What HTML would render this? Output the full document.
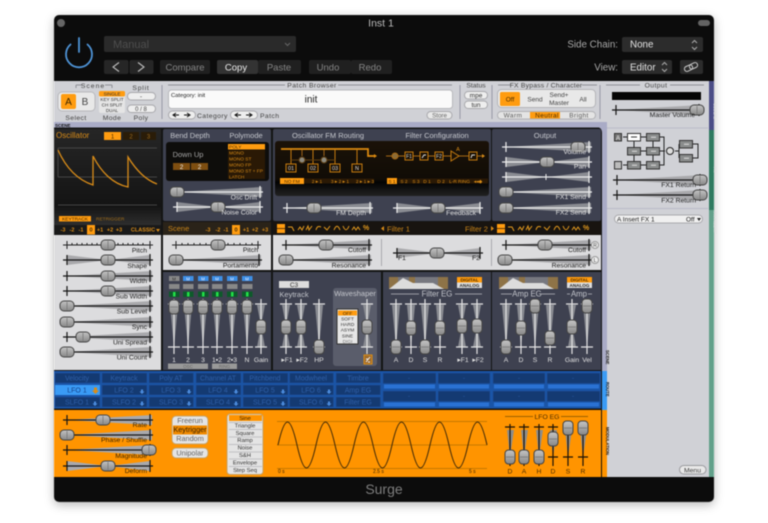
<!DOCTYPE html>
<html><head><meta charset="utf-8"><style>
html,body{margin:0;padding:0;background:#fff;width:768px;height:523px;overflow:hidden}
#w{position:absolute;left:54px;top:15px;width:660px;height:487px;border-radius:5px;box-shadow:0 3px 10px rgba(0,0,0,.28)}
svg{position:absolute;left:0;top:0;filter:blur(.5px)}
text{font-family:"Liberation Sans",sans-serif}
.c{text-anchor:middle}.r{text-anchor:end}
.l{font-size:6.8px;fill:#1c1c1c}
.d{font-size:6.8px;fill:#e4e4e4}
.h{font-size:7.5px;fill:#c4c6cc}
.o{font-size:5.5px;fill:#d98c18;font-weight:bold}
.g{font-size:6.800px;fill:#444;letter-spacing:.4px}
.b{font-size:7px;fill:#2f5fa8}
.k{font-size:9.5px;fill:#858585}
</style></head><body><div id="w"></div>
<svg width="768" height="523" viewBox="0 0 768 523" xmlns="http://www.w3.org/2000/svg">
<defs>
<linearGradient id="hg" x1="0" y1="0" x2="0" y2="1"><stop offset="0" stop-color="#c4c4c4"/><stop offset="1" stop-color="#888"/></linearGradient>
<linearGradient id="og" x1="0" y1="0" x2="0" y2="1"><stop offset="0" stop-color="#262626"/><stop offset=".8" stop-color="#141414"/><stop offset="1" stop-color="#2e2e2e"/></linearGradient>
<linearGradient id="ig" x1="0" y1="0" x2="0" y2="1"><stop offset="0" stop-color="#1b1208"/><stop offset=".7" stop-color="#100c06"/><stop offset=".75" stop-color="#030303"/><stop offset="1" stop-color="#222"/></linearGradient>
<g id="hh"><rect x="-7" y="-5" width="14" height="10" rx="4" fill="url(#hg)" stroke="#444" stroke-width="1"/><path d="M0 -4V4" stroke="#777" stroke-width=".8"/></g>
<g id="hv"><rect x="-5" y="-7" width="10" height="14" rx="3.5" fill="url(#hg)" stroke="#444" stroke-width="1"/><path d="M-4 0H4" stroke="#777" stroke-width=".8"/></g>
<g id="sl"><path d="M3 0L89 -5V5Z" fill="#a9a9ac"/><path d="M0 0H90M4 -5V5M87 -6V6" stroke="#151515" stroke-width="1.2" fill="none"/></g>
<g id="sb"><path d="M4 -5V5L45 0L87 5V-5L45 0Z" fill="#a9a9ac"/><path d="M0 0H90M4 -5V5M87 -6V6" stroke="#151515" stroke-width="1.2" fill="none"/></g>
<g id="sd"><path d="M3 0L89 -5V5Z" fill="#8a8c92"/><path d="M0 0H90M4 -5V5M87 -6V6" stroke="#eee" stroke-width="1.2" fill="none"/></g>
<g id="se"><path d="M4 -5V5L45 0L87 5V-5L45 0Z" fill="#8a8c92"/><path d="M0 0H90M4 -5V5M87 -6V6" stroke="#eee" stroke-width="1.2" fill="none"/></g>
<g id="vd"><path d="M0 46L-4 3H4Z" fill="#8a8c92"/><path d="M0 -3V52M-6 2H6M-6 45H6" stroke="#e4e4e4" stroke-width="1.2" fill="none"/></g>
<g id="vb"><path d="M-4 3H4L0 24L4 45H-4L0 24Z" fill="#8a8c92"/><path d="M0 -3V52M-6 2H6M-6 45H6" stroke="#e4e4e4" stroke-width="1.2" fill="none"/></g>
<g id="vo"><path d="M0 31L-3 4H4Z" fill="#8d8d8d"/><path d="M0 -2V40M-5 1H5M-5 31H5" stroke="#1a1208" stroke-width="1.2" fill="none"/></g>
<g id="eg"><rect width="59" height="12" fill="#77787f"/><rect x="0" width="9" height="12" fill="#8e7347"/><rect x="20" width="6" height="12" fill="#8e7347"/><rect x="49" width="10" height="12" fill="#8e7347"/><path d="M0 12L14 1L24 6H44L55 12Z" fill="#dcdcdc"/></g>
<g id="dg"><rect width="25" height="11" fill="#ddd"/><rect width="25" height="5.5" fill="#ff9c10"/><text x="12.5" y="4.6" class="c" style="font-size:4.6px;fill:#4a2c00;font-weight:bold">DIGITAL</text><text x="12.5" y="10" class="c" style="font-size:4.6px;fill:#222;font-weight:bold">ANALOG</text></g>
<g id="ft"><path d="M0 3H4L6 7M10 6L12 3L14 6L16 2M18 6L20 2L21 6L24 2M28 6C29 2 31 2 33 3M36 3L39 6L42 2M46 6C48 1 50 1 52 6M55 2C57 7 59 7 61 2M64 6L66 3L68 6L70 3L72 6" stroke="#e39a1e" stroke-width="1" fill="none"/><text x="75" y="6" style="font-size:7px;fill:#e39a1e;font-weight:bold">%</text></g>
</defs>

<!-- window -->
<rect x="54" y="15" width="660" height="487" rx="5" fill="#0c0c0c"/>
<circle cx="61" cy="23" r="4" fill="#666"/>
<rect x="698" y="20" width="12" height="6" rx="3" fill="#636363"/>
<text x="381" y="26.5" class="c" style="font-size:10.5px;fill:#bcbcbc">Inst 1</text>
<!-- power -->
<path d="M70.500 44.500A13 13 0 1 0 87.500 44.500" fill="none" stroke="#4e93d6" stroke-width="1.8" stroke-linecap="round"/>
<path d="M79 38V52" stroke="#4e93d6" stroke-width="1.8" stroke-linecap="round"/>
<!-- top controls -->
<rect x="104" y="36" width="192" height="16" rx="2" fill="#2a2a2a"/>
<text x="113" y="48" style="font-size:11px;fill:#4e4e4e">Manual</text>
<path d="M285 43l2.500 2.500 2.500-2.500" stroke="#666" fill="none"/>
<rect x="104" y="60" width="24.500" height="14" rx="2" fill="#262626"/><rect x="129.500" y="60" width="24" height="14" rx="2" fill="#262626"/>
<path d="M119 62.500L113 67L119 71.500M138 62.500L144 67L138 71.500" stroke="#bdbdbd" stroke-width="1.1" fill="none"/>
<rect x="160" y="60" width="50" height="14" rx="2" fill="#202020"/><text x="185" y="70.500" class="c k">Compare</text>
<rect x="217" y="60" width="41" height="14" rx="2" fill="#333"/><text x="236" y="70.500" class="c" style="font-size:9.500px;fill:#ececec">Copy</text>
<rect x="258" y="60" width="43" height="14" rx="2" fill="#202020"/><text x="279" y="70.500" class="c k">Paste</text>
<rect x="309" y="60" width="42" height="14" rx="2" fill="#202020"/><text x="328" y="70.500" class="c k">Undo</text>
<rect x="351" y="60" width="41" height="14" rx="2" fill="#202020"/><text x="370" y="70.500" class="c k">Redo</text>
<text x="618" y="47.500" class="r" style="font-size:9.800px;fill:#a8a8a8">Side Chain:</text>
<rect x="622" y="37" width="81" height="15" rx="2" fill="#2c2c2c"/><text x="630" y="47.500" style="font-size:9.800px;fill:#e4e4e4">None</text>
<path d="M692 43l2.500-2.500 2.500 2.500M692 47l2.500 2.500 2.500-2.500" stroke="#aaa" fill="none"/>
<text x="618" y="70.500" class="r" style="font-size:9.800px;fill:#a8a8a8">View:</text>
<rect x="622" y="60" width="50" height="14" rx="2" fill="#2c2c2c"/><text x="630" y="70.500" style="font-size:9.800px;fill:#e4e4e4">Editor</text>
<path d="M662 65l2.500-2.500 2.500 2.500M662 69l2.500 2.500 2.500-2.500" stroke="#aaa" fill="none"/>
<rect x="680" y="60" width="23" height="14" rx="2" fill="#2c2c2c"/>
<g transform="rotate(-25 691 67)" fill="none" stroke="#ccc"><rect x="684" y="64.500" width="8.500" height="5" rx="2.500"/><rect x="689.500" y="64.500" width="8.500" height="5" rx="2.500"/></g>

<!-- panel base -->
<rect x="54" y="81" width="660" height="396" fill="#d0d1d6"/>
<rect x="54" y="122" width="553" height="287" fill="#a9abc6"/>
<path d="M54 127H596Q602 127 602 133V409H54Z" fill="#141414"/>
<rect x="54" y="122" width="553" height="5.500" fill="#a9abc6"/>
<text x="55" y="127" style="font-size:4.500px;font-weight:bold;fill:#111">SCENE</text>

<!-- header -->
<g fill="none" stroke="#8f9097"><path d="M76 85H82M105 85H112M76 85V88M112 85V88"/><path d="M168 85H285M338 85H452M498 85H511M582 85H597M606 85H640M670 85H704"/><path d="M162 85V119M460 85V119M492 85V119M600 85V119" stroke="#9899a6"/></g>
<text x="93" y="88" class="c g" style="letter-spacing:1px">Scene</text>
<text x="141" y="90" class="c g" style="letter-spacing:.8px">Split</text>
<text x="312" y="87.500" class="c g">Patch Browser</text>
<text x="476" y="87.500" class="c g" style="letter-spacing:0">Status</text>
<text x="546" y="87.500" class="c g" style="letter-spacing:.2px">FX Bypass / Character</text>
<text x="656" y="87.500" class="c g">Output</text>
<rect x="58" y="92" width="37" height="19" rx="4" fill="#e8e8e8" stroke="#b8b8bc"/>
<rect x="61" y="94" width="15" height="15" rx="2" fill="#ff9c10"/>
<text x="68.500" y="105" class="c" style="font-size:10px;fill:#3a2500">A</text>
<text x="85" y="105" class="c" style="font-size:10px;fill:#444">B</text>
<text x="76" y="120" class="c g">Select</text><text x="112" y="120" class="c g">Mode</text><text x="141" y="120" class="c g">Poly</text>
<rect x="99" y="91" width="26" height="22" rx="2" fill="#e5e5e5"/>
<rect x="99" y="91" width="26" height="5.500" rx="1.500" fill="#ff9c10"/>
<g style="font-size:4.600px;fill:#333"><text x="112" y="95.500" class="c">SINGLE</text><text x="112" y="101" class="c">KEY SPLIT</text><text x="112" y="106.500" class="c">CH SPLIT</text><text x="112" y="112" class="c">DUAL</text></g>
<rect x="127.500" y="92.500" width="28" height="7.500" rx="3.700" fill="#eee" stroke="#a8a8ac"/><text x="141" y="98.500" class="c" style="font-size:6px;fill:#333">-</text>
<rect x="127.500" y="105" width="28" height="7.500" rx="3.700" fill="#eee" stroke="#a8a8ac"/><text x="141" y="111" class="c" style="font-size:6px;fill:#444">0 / 8</text>
<rect x="168.500" y="90" width="284" height="18.500" rx="3" fill="#fafafa" stroke="#b8b8bc"/>
<text x="171" y="97" style="font-size:5.800px;fill:#222">Category: init</text>
<text x="311" y="102.500" class="c" style="font-size:10px;fill:#222">init</text>
<rect x="168.500" y="111" width="27" height="8" rx="4" fill="#eee" stroke="#a8a8ac"/><path d="M173 115H179M176 113l-3 2 3 2M184 115H190M187 113l3 2-3 2" stroke="#111" fill="none"/>
<text x="197" y="118" class="g">Category</text>
<rect x="230.500" y="111" width="27" height="8" rx="4" fill="#eee" stroke="#a8a8ac"/><path d="M235 115H241M238 113l-3 2 3 2M246 115H252M249 113l3 2-3 2" stroke="#111" fill="none"/>
<text x="260" y="118" class="g">Patch</text>
<rect x="427" y="111.500" width="25" height="7.500" rx="3.700" fill="#e8e8e8" stroke="#a8a8ac"/><text x="439.500" y="117.500" class="c" style="font-size:6.200px;fill:#666">Store</text>
<rect x="464.500" y="91.500" width="23" height="7.500" rx="3.700" fill="#eee" stroke="#a8a8ac"/><text x="476" y="97.500" class="c" style="font-size:6.500px;fill:#333">mpe</text>
<rect x="464.500" y="101" width="23" height="7.500" rx="3.700" fill="#eee" stroke="#a8a8ac"/><text x="476" y="107" class="c" style="font-size:6.500px;fill:#333">tun</text>
<rect x="497.500" y="89.500" width="98" height="18" rx="4" fill="#e8e8e8" stroke="#b4b4b8"/>
<rect x="500" y="92" width="20" height="14" rx="1.500" fill="#ff9c10"/>
<g style="font-size:6.500px;fill:#444"><text x="510" y="101.500" class="c" style="fill:#4a2c00">Off</text><text x="535" y="101.500" class="c">Send</text><text x="559" y="97" class="c">Send+</text><text x="559" y="105" class="c">Master</text><text x="583" y="101.500" class="c">All</text></g>
<rect x="497.500" y="111.500" width="98" height="7.500" rx="3.700" fill="#e4e4e4" stroke="#b0b0b4"/>
<rect x="530" y="112" width="30" height="6.500" fill="#ff9c10"/>
<g style="font-size:6.500px;fill:#5c5c5c;letter-spacing:.4px"><text x="513" y="117.500" class="c">Warm</text><text x="547" y="117.500" class="c" style="fill:#4a2c00">Neutral</text><text x="579" y="117.500" class="c">Bright</text></g>
<rect x="612" y="92" width="89" height="8" fill="#050505"/>
<use href="#sl" x="612" y="110"/>
<path d="M612 110H700" stroke="#151515"/>
<use href="#hh" x="697" y="110"/>
<text x="695" y="117" class="r l">Master Volume</text>

<!-- right strips -->
<rect x="709" y="81" width="5" height="49" fill="#4b4d86"/>
<rect x="709" y="130" width="5" height="80" fill="#2f7a60"/>
<rect x="709" y="210" width="5" height="267" fill="#62a08a"/>
<path d="M607 128H708M607 208.500H708" stroke="#b9bbc8"/>
<text transform="translate(713.500 103) rotate(90)" style="font-size:4px;fill:#ddd">GLOBAL</text>
<text transform="translate(713.500 167) rotate(90)" style="font-size:4px;fill:#ddd">FX</text>
<text transform="translate(713.500 212) rotate(90)" style="font-size:4px;fill:#ddd">FX INSERT</text>
<rect x="602" y="371" width="5" height="39" fill="#3a9bf5"/>
<rect x="602" y="410" width="5" height="67" fill="#ff9400"/>
<text transform="translate(606 350) rotate(90)" style="font-size:4.200px;font-weight:bold;fill:#222">SCENE</text>
<text transform="translate(606 382) rotate(90)" style="font-size:4.200px;font-weight:bold;fill:#123">ROUTE</text>
<text transform="translate(606 427) rotate(90)" style="font-size:4.200px;font-weight:bold;fill:#321">MODULATION</text>

<!-- FX routing -->
<g fill="none" stroke="#222" stroke-width="1">
<path d="M623 137H627M640 137H646M623 165H627M640 165H646M660 137H664V165H660M660 151H665M675 151H679V144M679 158V151M693 144H698V158H693M640 151H646"/>
<path d="M634 141V147M634 155V161M653 141V147M653 155V161"/>
</g>
<rect x="614.500" y="133.500" width="7" height="7.500" fill="#777" stroke="#333"/><text x="618" y="140" class="c" style="font-size:6px;fill:#eee">A</text>
<rect x="614.500" y="161.500" width="7" height="7.500" fill="#bbb" stroke="#333"/>
<rect x="627.500" y="133.500" width="13" height="7.500" fill="#fff" stroke="#333"/><path d="M631 137H637" stroke="#333"/>
<g fill="#8a8c8c" stroke="#333"><rect x="646.500" y="133.500" width="13" height="7.500"/><rect x="627.500" y="147.500" width="13" height="7.500"/><rect x="646.500" y="147.500" width="13" height="7.500"/><rect x="627.500" y="161.500" width="13" height="7.500"/><rect x="646.500" y="161.500" width="13" height="7.500"/><rect x="679.500" y="140.500" width="13" height="7.500"/><rect x="679.500" y="154.500" width="13" height="7.500"/></g>
<circle cx="670" cy="151" r="3.500" fill="#ddd" stroke="#222"/>
<g stroke="#ddd"><path d="M651 137.200H656M632 151.200H637M651 151.200H656M632 165.200H637M651 165.200H656M684 144.200H689M684 158.200H689"/></g>
<use href="#sl" x="613" y="180"/><path d="M700 180H705" stroke="#151515"/><use href="#hh" x="700" y="180"/><text x="696" y="187" class="r l">FX1 Return</text>
<use href="#sl" x="613" y="195"/><path d="M700 195H705" stroke="#151515"/><use href="#hh" x="700" y="195"/><text x="696" y="202.500" class="r l">FX2 Return</text>
<rect x="614.500" y="215" width="88" height="8" rx="4" fill="#f0f0f0" stroke="#a8a8ac"/>
<text x="617" y="221.500" style="font-size:6.500px;fill:#222">A Insert FX 1</text><text x="686" y="221.500" style="font-size:6.500px;fill:#222">Off</text><path d="M697 218h4l-2 3z" fill="#222"/>
<rect x="679.500" y="465.500" width="26.500" height="8.500" rx="4.200" fill="#e8e8e8" stroke="#9a9a9e"/><text x="692.500" y="472.300" class="c" style="font-size:6.800px;fill:#444">Menu</text>

<!-- oscillator -->
<rect x="54" y="129" width="107" height="96" fill="url(#og)"/>
<text x="56" y="138" style="font-size:8px;fill:#d98c18">Oscillator</text>
<rect x="104" y="132" width="17" height="8" fill="#ff9c10"/><text x="112.500" y="138.500" class="c" style="font-size:6px;fill:#4a2c00">1</text>
<rect x="123" y="132" width="16" height="8" fill="#2a1c08"/><text x="131" y="138.500" class="c" style="font-size:6px;fill:#9a6a20">2</text>
<rect x="141" y="132" width="15" height="8" fill="#2a1c08"/><text x="148.500" y="138.500" class="c" style="font-size:6px;fill:#9a6a20">3</text>
<path d="M58 148H157M58 177H157M58 205H157M58 148V177" stroke="#454545" fill="none"/>
<path d="M58 150C66 168 78 180 93 185V156C101 172 113 184 128 187V157C136 170 146 180 157 184" fill="none" stroke="#d98c18" stroke-width="1.300"/>
<rect x="59" y="216" width="32" height="5.500" fill="#ff9c10"/><text x="75" y="220.700" class="c" style="font-size:4.800px;fill:#4a2c00">KEYTRACK</text>
<text x="96" y="220.700" style="font-size:4.800px;fill:#a06c18">RETRIGGER</text>
<rect x="54" y="225" width="107" height="10" fill="#191919"/>
<rect x="87" y="225" width="8" height="9.500" fill="#ff9c10"/>
<text x="63" y="231.500" class="c o">-3</text><text x="72" y="231.500" class="c o">-2</text><text x="81" y="231.500" class="c o">-1</text><text x="91" y="231.500" class="c o" style="fill:#4a2c00">0</text><text x="100" y="231.500" class="c o">+1</text><text x="110" y="231.500" class="c o">+2</text><text x="119" y="231.500" class="c o">+3</text><text x="143" y="231.500" class="c o">CLASSIC</text>
<path d="M156 229h4l-2 3z" fill="#d98c18"/>
<rect x="54" y="235" width="107" height="135" fill="#dcdcde"/>
<path d="M63 245H153M67 241V249M150 241V249M72 245v-2M77 245v-2M82 245v-2M87 245v-2M92 245v-2M97 245v-2M118 245v-2M123 245v-2M128 245v-2M133 245v-2M138 245v-2M143 245v-2" stroke="#222" fill="none"/><use href="#hh" x="108" y="245"/><text x="147" y="252.500" class="r l">Pitch</text>
<use href="#sb" x="63" y="260"/><use href="#hh" x="108" y="260"/><text x="147" y="268" class="r l">Shape</text>
<use href="#sl" x="63" y="276"/><use href="#hh" x="108" y="276"/><text x="147" y="283" class="r l">Width</text>
<use href="#sl" x="63" y="291"/><use href="#hh" x="108" y="291"/><text x="147" y="298.500" class="r l">Sub Width</text>
<use href="#sl" x="63" y="306"/><use href="#hh" x="67" y="306"/><text x="147" y="313.500" class="r l">Sub Level</text>
<use href="#sl" x="63" y="322"/><use href="#hh" x="67" y="322"/><text x="147" y="329" class="r l">Sync</text>
<use href="#sl" x="63" y="337"/><use href="#hh" x="83" y="337"/><text x="147" y="344.500" class="r l">Uni Spread</text>
<use href="#sl" x="63" y="352"/><use href="#hh" x="67" y="352"/><text x="147" y="359.500" class="r l">Uni Count</text>

<!-- col2 top -->
<rect x="163" y="129" width="108" height="92" rx="2" fill="#3e4150"/>
<text x="190" y="138" class="c h">Bend Depth</text><text x="246" y="138" class="c h">Polymode</text>
<rect x="166" y="142" width="103" height="39" rx="3" fill="#0e0d0b"/>
<text x="188" y="157" class="c" style="font-size:7.500px;fill:#a5a5a5">Down Up</text>
<rect x="173" y="163" width="17" height="7" fill="#7e4e10"/><rect x="191" y="163" width="17" height="7" fill="#7e4e10"/>
<text x="181.500" y="169" class="c" style="font-size:6.500px;fill:#eee">2</text><text x="199.500" y="169" class="c" style="font-size:6.500px;fill:#eee">2</text>
<rect x="228" y="144" width="37" height="5.500" fill="#ff9c10"/><rect x="228" y="150" width="37" height="29" fill="#2a1905"/>
<g style="font-size:4.800px;fill:#d98c18"><text x="229" y="148.700" style="fill:#4a2c00">POLY</text><text x="229" y="154.700">MONO</text><text x="229" y="160.700">MONO ST</text><text x="229" y="166.700">MONO FP</text><text x="229" y="172.700">MONO ST + FP</text><text x="229" y="178.700">LATCH</text></g>
<use href="#sd" x="173" y="192"/><use href="#hh" x="177" y="192"/><text x="257" y="199.500" class="r d">Osc Drift</text>
<use href="#se" x="173" y="207"/><use href="#hh" x="218" y="207"/><text x="257" y="214.500" class="r d">Noise Color</text>
<rect x="163" y="222" width="108" height="13" fill="#2a2319"/>
<text x="168" y="231" style="font-size:7.500px;fill:#c98418">Scene</text>
<rect x="232" y="225" width="8" height="9.500" fill="#ff9c10"/>
<text x="208" y="231.500" class="c o">-3</text><text x="218" y="231.500" class="c o">-2</text><text x="226" y="231.500" class="c o">-1</text><text x="236" y="231.500" class="c o" style="fill:#4a2c00">0</text><text x="246" y="231.500" class="c o">+1</text><text x="255" y="231.500" class="c o">+2</text><text x="265" y="231.500" class="c o">+3</text>
<rect x="163" y="235" width="108" height="35" fill="#dcdcde"/>
<path d="M172 245H261M176 241V249M258 241V249M182 245v-2M188 245v-2M194 245v-2M200 245v-2M206 245v-2M228 245v-2M234 245v-2M240 245v-2M246 245v-2M252 245v-2" stroke="#222" fill="none"/><use href="#hh" x="218" y="245"/><text x="258" y="252" class="r l">Pitch</text>
<use href="#sl" x="172" y="260"/><use href="#hh" x="176" y="260"/><text x="258" y="267.500" class="r l">Portamento</text>

<!-- col3 top -->
<rect x="273" y="129" width="218" height="92" rx="2" fill="#3e4150"/>
<text x="328" y="138" class="c h">Oscillator FM Routing</text><text x="437" y="138" class="c h">Filter Configuration</text>
<rect x="275" y="141" width="214" height="55" rx="3" fill="url(#ig)"/>
<path d="M281 149H368V156H374" fill="none" stroke="#e08c10" stroke-width="1.700"/>
<path d="M374 154l3 2-3 2" fill="#e08c10"/>
<path d="M291 164V150M313 164V150M335 164V150M357 164V150" stroke="#c47a10" fill="none"/>
<path d="M291 160H335" stroke="#5c3c10" fill="none"/>
<circle cx="302" cy="160" r="3" fill="#8c8a80" stroke="#5c3c10"/><circle cx="324" cy="160" r="3" fill="#8c8a80" stroke="#5c3c10"/>
<path d="M302 156V150M324 156V150" stroke="#a06418"/>
<g fill="#1c1206" stroke="#c47a10"><rect x="286" y="164" width="10" height="8"/><rect x="308" y="164" width="10" height="8"/><rect x="330" y="164" width="10" height="8"/><rect x="352" y="164" width="10" height="8"/></g>
<g style="font-size:5.500px;fill:#ddd"><text x="291" y="170" class="c">01</text><text x="313" y="170" class="c">02</text><text x="335" y="170" class="c">03</text><text x="357" y="170" class="c">N</text></g>
<rect x="280" y="178.500" width="94" height="5" fill="#2a1905"/>
<rect x="280" y="178" width="24" height="6" fill="#ff9c10"/>
<g style="font-size:4.800px;fill:#d98c18"><text x="292" y="182.800" class="c" style="fill:#4a2c00">NO FM</text><text x="317" y="182.800" class="c">2 ▸ 1</text><text x="340" y="182.800" class="c">3 ▸ 2 ▸ 1</text><text x="365" y="182.800" class="c">2 ▸ 1 ▸ 3</text></g>
<path d="M386 156H483" stroke="#a86a14" fill="none"/><path d="M482 154l3 2-3 2" fill="#d98c18"/>
<circle cx="395" cy="156" r="3" fill="#8c6c38" stroke="#a86a14"/>
<g fill="#1c1206" stroke="#c47a10"><rect x="405" y="152" width="8" height="8"/><rect x="420" y="152" width="8" height="8"/><rect x="435" y="152" width="8" height="8"/><path d="M451 151V161L459 156Z"/><rect x="469" y="152" width="8" height="8"/></g>
<g style="font-size:5px;fill:#ddd"><text x="409" y="158" class="c">F1</text><text x="439" y="158" class="c">F2</text><text x="458" y="151" class="c" style="fill:#d98c18;font-size:5.500px">A</text></g>
<path d="M422 158L424 155H426M471 158L472 155H475" stroke="#ddd" fill="none"/>
<rect x="387" y="178" width="10" height="6" fill="#ff9c10"/>
<rect x="398" y="178.500" width="90" height="5" fill="#2a1905"/>
<g style="font-size:4.800px;fill:#d98c18"><text x="392" y="182.800" class="c" style="fill:#4a2c00">S 1</text><text x="404" y="182.800" class="c">S 2</text><text x="416" y="182.800" class="c">S 3</text><text x="427" y="182.800" class="c">D 1</text><text x="441" y="182.800" class="c">D 2</text><text x="453" y="182.800" class="c">L-R</text><text x="464" y="182.800" class="c">RING</text><text x="478" y="182.800" class="c">◂◂◆</text></g>
<use href="#sd" x="283" y="208"/><use href="#hh" x="314" y="208"/><text x="366" y="215" class="r d">FM Depth</text>
<use href="#se" x="393" y="208"/><use href="#hh" x="438" y="208"/><text x="476" y="215" class="r d">Feedback</text>

<!-- output -->
<rect x="492" y="129" width="109" height="92" rx="2" fill="#3e4150"/>
<text x="545" y="138" class="c h">Output</text>
<use href="#sd" x="502" y="147"/><use href="#hh" x="578" y="147"/><text x="586" y="154" class="r d">Volume</text>
<use href="#se" x="502" y="162"/><use href="#hh" x="547" y="162"/><text x="586" y="168.500" class="r d">Pan</text>
<use href="#se" x="502" y="177"/><path d="M546 174V180" stroke="#eee"/>
<use href="#sd" x="502" y="192"/><use href="#hh" x="506" y="192"/><text x="586" y="199" class="r d">FX1 Send</text>
<use href="#sd" x="502" y="208"/><use href="#hh" x="506" y="208"/><text x="586" y="214.500" class="r d">FX2 Send</text>

<!-- filter header -->
<rect x="273" y="222" width="328" height="13" fill="#181410"/>
<rect x="277" y="224" width="8" height="9" fill="#ff9c10"/><path d="M277 228.500H285" stroke="#6a3c00"/>
<use href="#ft" x="288" y="224"/>
<path d="M384 226v5l-3-2.500z" fill="#d98c18"/><text x="387" y="231.500" style="font-size:7.500px;fill:#c98418">Filter 1</text>
<text x="465" y="231.500" style="font-size:7.500px;fill:#c98418">Filter 2</text><path d="M491 226v5l3-2.500z" fill="#d98c18"/>
<rect x="497" y="224" width="8" height="9" fill="#ff9c10"/><path d="M497 228.500H505" stroke="#6a3c00"/>
<use href="#ft" x="508" y="224"/>
<rect x="273" y="235" width="328" height="35" fill="#dcdcde"/>
<path d="M381.500 239V266M491.500 239V266" stroke="#a8a8ae"/>
<use href="#sl" x="282" y="245"/><use href="#hh" x="326" y="245"/><text x="366" y="252" class="r l">Cutoff</text>
<use href="#sl" x="282" y="260"/><use href="#hh" x="286" y="260"/><text x="366" y="267.500" class="r l">Resonance</text>
<use href="#sb" x="393" y="253"/><use href="#hh" x="437" y="253"/><text x="398" y="260" class="l">F1</text><text x="472" y="260" class="l">F2</text>
<use href="#sl" x="502" y="245"/><use href="#hh" x="545" y="245"/><text x="586" y="252" class="r l">Cutoff</text>
<use href="#sl" x="502" y="260"/><use href="#hh" x="505" y="260"/><text x="586" y="267.500" class="r l">Resonance</text>
<circle cx="595" cy="245" r="3.500" fill="#eee" stroke="#999"/><text x="595" y="247" class="c" style="font-size:5px;fill:#444">R</text>
<circle cx="595" cy="260" r="3.500" fill="#eee" stroke="#999"/><text x="595" y="262" class="c" style="font-size:5px;fill:#444">L</text>

<!-- mixer row -->
<rect x="163" y="272" width="108" height="98" fill="#3e4150"/>
<g fill="#3d8fe6"><rect x="183" y="276" width="10.500" height="5"/><rect x="198" y="276" width="10.500" height="5"/><rect x="212" y="276" width="10.500" height="5"/><rect x="227" y="276" width="10.500" height="5"/><rect x="242" y="276" width="10.500" height="5"/></g>
<rect x="169" y="276" width="10.500" height="5" fill="#888"/>
<g fill="#888"><rect x="169" y="284" width="10.500" height="5"/><rect x="183" y="284" width="10.500" height="5"/><rect x="198" y="284" width="10.500" height="5"/><rect x="212" y="284" width="10.500" height="5"/><rect x="227" y="284" width="10.500" height="5"/><rect x="242" y="284" width="10.500" height="5"/></g>
<g fill="#0d5a2a"><rect x="169" y="291.500" width="10.500" height="5.500"/><rect x="183" y="291.500" width="10.500" height="5.500"/><rect x="198" y="291.500" width="10.500" height="5.500"/><rect x="212" y="291.500" width="10.500" height="5.500"/><rect x="227" y="291.500" width="10.500" height="5.500"/><rect x="242" y="291.500" width="10.500" height="5.500"/></g>
<g fill="#22e048"><rect x="173" y="292" width="2.500" height="4.500"/><rect x="187" y="292" width="2.500" height="4.500"/><rect x="202" y="292" width="2.500" height="4.500"/><rect x="216" y="292" width="2.500" height="4.500"/><rect x="231" y="292" width="2.500" height="4.500"/><rect x="246" y="292" width="2.500" height="4.500"/></g>
<g style="font-size:4.500px"><text x="174" y="280.300" class="c" style="fill:#333">M</text><text x="188" y="280.300" class="c" style="fill:#eef">M</text><text x="203" y="280.300" class="c" style="fill:#eef">M</text><text x="217" y="280.300" class="c" style="fill:#eef">M</text><text x="232" y="280.300" class="c" style="fill:#eef">M</text><text x="247" y="280.300" class="c" style="fill:#eef">M</text></g>
<use href="#vd" x="174" y="302"/><use href="#hv" x="174" y="307"/>
<use href="#vd" x="188" y="302"/><use href="#hv" x="188" y="307"/>
<use href="#vd" x="203" y="302"/><use href="#hv" x="203" y="307"/>
<use href="#vd" x="217" y="302"/><use href="#hv" x="217" y="307"/>
<use href="#vd" x="232" y="302"/><use href="#hv" x="232" y="307"/>
<use href="#vd" x="247" y="302"/><use href="#hv" x="247" y="307"/>
<use href="#vb" x="261" y="302"/><use href="#hv" x="261" y="327"/>
<text x="174" y="362" class="c d">1</text><text x="188" y="362" class="c d">2</text><text x="203" y="362" class="c d">3</text><text x="217" y="362" class="c d">1▪2</text><text x="232" y="362" class="c d">2▪3</text><text x="247" y="362" class="c d">N</text><text x="261" y="362" class="c d">Gain</text>
<rect x="168" y="363.500" width="40" height="5.500" fill="#999"/><rect x="212" y="363.500" width="25" height="5.500" fill="#999"/>
<text x="188" y="368" class="c" style="font-size:4.500px;fill:#666">OSC</text><text x="224.500" y="368" class="c" style="font-size:4.500px;fill:#666">RING</text>

<rect x="273" y="272" width="108" height="98" fill="#3e4150"/>
<rect x="279" y="281" width="30" height="7" fill="#dcdcdc"/><text x="294" y="287" class="c" style="font-size:6.500px;fill:#333">C3</text>
<text x="294" y="297" class="c h">Keytrack</text>
<use href="#vb" x="286" y="302"/><use href="#hv" x="286" y="327"/>
<use href="#vb" x="301" y="302"/><use href="#hv" x="301" y="327"/>
<use href="#vd" x="319" y="302"/><use href="#hv" x="319" y="347"/>
<g style="font-size:6.800px;fill:#e0e0e0"><text x="287" y="362" class="c">▸F1</text><text x="302" y="362" class="c">▸F2</text><text x="319" y="362" class="c">HP</text></g>
<rect x="333" y="288" width="44" height="78" rx="3" fill="#5a5d6b"/>
<text x="355" y="296" class="c h">Waveshaper</text>
<rect x="337" y="309" width="21" height="35" fill="#e6e6e6" stroke="#333"/>
<rect x="338" y="310.500" width="19" height="5" fill="#ff9c10"/>
<g style="font-size:4.800px;fill:#333"><text x="347.500" y="314.800" class="c" style="fill:#4a2c00">OFF</text><text x="347.500" y="320.500" class="c">SOFT</text><text x="347.500" y="326" class="c">HARD</text><text x="347.500" y="331.500" class="c">ASYM</text><text x="347.500" y="337.500" class="c">SINE</text><text x="347.500" y="343" class="c" style="fill:#777">DIGI</text></g>
<use href="#vb" x="367" y="302"/><use href="#hv" x="367" y="327"/>
<rect x="364" y="355" width="8" height="9" fill="#a06c2c" stroke="#d98c18"/><path d="M366 362L370 357M366 359h2M368 362h2" stroke="#eee" fill="none"/>

<rect x="383" y="272" width="108" height="98" fill="#3e4150"/>
<use href="#eg" x="389" y="277"/><use href="#dg" x="457" y="277"/>
<text x="437" y="296.500" class="c h" style="font-size:7.800px">Filter EG</text>
<path d="M391 294H419M455 294H482" stroke="#9a9ca4"/>
<use href="#vd" x="396" y="302"/><use href="#hv" x="396" y="347"/>
<use href="#vd" x="411" y="302"/><use href="#hv" x="411" y="328"/>
<use href="#vd" x="425" y="302"/><use href="#hv" x="425" y="347"/>
<use href="#vd" x="440" y="302"/><use href="#hv" x="440" y="328"/>
<use href="#vb" x="462" y="302"/><use href="#hv" x="462" y="326"/>
<use href="#vb" x="477" y="302"/><use href="#hv" x="477" y="326"/>
<g style="font-size:6.800px;fill:#e0e0e0"><text x="396" y="362" class="c">A</text><text x="411" y="362" class="c">D</text><text x="425" y="362" class="c">S</text><text x="440" y="362" class="c">R</text><text x="463" y="362" class="c">▸F1</text><text x="478" y="362" class="c">▸F2</text></g>

<rect x="492" y="272" width="109" height="98" fill="#3e4150"/>
<use href="#eg" x="499" y="277"/><use href="#dg" x="567" y="277"/>
<text x="527" y="296.500" class="c h" style="font-size:7.800px">Amp EG</text><text x="579" y="296.500" class="c h" style="font-size:7.800px">Amp</text>
<path d="M501 294H512M541 294H555M567 294H570M588 294H592" stroke="#9a9ca4"/>
<use href="#vd" x="506" y="302"/><use href="#hv" x="506" y="347"/>
<use href="#vd" x="521" y="302"/><use href="#hv" x="521" y="328"/>
<use href="#vd" x="535" y="302"/><use href="#hv" x="535" y="306"/>
<use href="#vd" x="550" y="302"/><use href="#hv" x="550" y="338"/>
<use href="#vb" x="572" y="302"/><use href="#hv" x="572" y="327"/>
<use href="#vd" x="587" y="302"/><use href="#hv" x="587" y="306"/>
<g style="font-size:6.800px;fill:#e0e0e0"><text x="506" y="362" class="c">A</text><text x="521" y="362" class="c">D</text><text x="535" y="362" class="c">S</text><text x="550" y="362" class="c">R</text><text x="572" y="362" class="c">Gain</text><text x="587" y="362" class="c">Vel</text></g>

<!-- blue routing -->
<rect x="54" y="371" width="547" height="37.500" fill="#1a55a8"/>
<g fill="#143a72" stroke="#1e4f98" stroke-width=".7">
<rect x="55" y="373" width="45" height="10"/><rect x="102" y="373" width="45" height="10"/><rect x="149" y="373" width="44.500" height="10"/><rect x="196" y="373" width="45" height="10"/><rect x="243" y="373" width="45" height="10"/><rect x="289.500" y="373" width="44" height="10"/><rect x="336" y="373" width="44.500" height="10"/>
<rect x="102" y="385" width="45" height="10"/><rect x="149" y="385" width="44.500" height="10"/><rect x="196" y="385" width="45" height="10"/><rect x="243" y="385" width="45" height="10"/><rect x="289.500" y="385" width="44" height="10"/><rect x="336" y="385" width="44.500" height="10"/>
<rect x="55" y="397" width="45" height="10"/><rect x="102" y="397" width="45" height="10"/><rect x="149" y="397" width="44.500" height="10"/><rect x="196" y="397" width="45" height="10"/><rect x="243" y="397" width="45" height="10"/><rect x="289.500" y="397" width="44" height="10"/><rect x="336" y="397" width="44.500" height="10"/>
<rect x="383" y="373" width="53" height="10.500"/><rect x="438" y="373" width="52" height="10.500"/><rect x="493" y="373" width="52" height="10.500"/><rect x="547" y="373" width="53" height="10.500"/>
<rect x="383" y="391" width="53" height="10.500"/><rect x="438" y="391" width="52" height="10.500"/><rect x="493" y="391" width="52" height="10.500"/><rect x="547" y="391" width="53" height="10.500"/>
</g>
<g fill="#2a72d4"><rect x="384" y="384.500" width="51" height="4"/><rect x="439" y="384.500" width="50" height="4"/><rect x="494" y="384.500" width="50" height="4"/><rect x="548" y="384.500" width="51" height="4"/><rect x="384" y="402.500" width="51" height="4"/><rect x="439" y="402.500" width="50" height="4"/><rect x="494" y="402.500" width="50" height="4"/><rect x="548" y="402.500" width="51" height="4"/></g>
<rect x="55" y="385" width="45" height="10" fill="#3a9bf5"/>
<text x="77" y="380.500" class="c b">Velocity</text><text x="124" y="380.500" class="c b">Keytrack</text><text x="171" y="380.500" class="c b">Poly AT</text><text x="218" y="380.500" class="c b">Channel AT</text><text x="265" y="380.500" class="c b">Pitchbend</text><text x="311" y="380.500" class="c b">Modwheel</text><text x="358" y="380.500" class="c b">Timbre</text>
<text x="77" y="392.500" class="c b" style="fill:#14438c">LFO 1</text><text x="124" y="392.500" class="c b">LFO 2</text><text x="171" y="392.500" class="c b">LFO 3</text><text x="218" y="392.500" class="c b">LFO 4</text><text x="265" y="392.500" class="c b">LFO 5</text><text x="311" y="392.500" class="c b">LFO 6</text><text x="358" y="392.500" class="c b">Amp EG</text>
<text x="77" y="404.500" class="c b">SLFO 1</text><text x="124" y="404.500" class="c b">SLFO 2</text><text x="171" y="404.500" class="c b">SLFO 3</text><text x="218" y="404.500" class="c b">SLFO 4</text><text x="265" y="404.500" class="c b">SLFO 5</text><text x="311" y="404.500" class="c b">SLFO 6</text><text x="358" y="404.500" class="c b">Filter EG</text>
<path d="M94 387.500h3v3h2l-3.500 3.500-3.500-3.500h2z" fill="#d98c18"/>
<g fill="#4d8ee0"><path d="M141 389.500h2v2h1.500l-2.500 2.500-2.500-2.500h1.500zM188 389.500h2v2h1.500l-2.500 2.500-2.500-2.500h1.500zM235 389.500h2v2h1.500l-2.500 2.500-2.500-2.500h1.500zM282 389.500h2v2h1.500l-2.500 2.500-2.500-2.500h1.500zM328 389.500h2v2h1.500l-2.500 2.500-2.500-2.500h1.500zM94 401.500h2v2h1.500l-2.500 2.500-2.500-2.500h1.500zM141 401.500h2v2h1.500l-2.500 2.500-2.500-2.500h1.500zM188 401.500h2v2h1.500l-2.500 2.500-2.500-2.500h1.500zM235 401.500h2v2h1.500l-2.500 2.500-2.500-2.500h1.500zM282 401.500h2v2h1.500l-2.500 2.500-2.500-2.500h1.500zM328 401.500h2v2h1.500l-2.500 2.500-2.500-2.500h1.500z"/></g>
<g style="font-size:6px;fill:#2f5fa8"><text x="409" y="380" class="c">-</text><text x="464" y="380" class="c">-</text><text x="519" y="380" class="c">-</text><text x="573" y="380" class="c">-</text><text x="409" y="398" class="c">-</text><text x="464" y="398" class="c">-</text><text x="519" y="398" class="c">-</text><text x="573" y="398" class="c">-</text></g>

<!-- LFO orange -->
<rect x="54" y="410" width="547" height="67" fill="#ff9400"/>
<path d="M601.500 409V477" stroke="#1a1206"/>
<path d="M54 409.500H602" stroke="#1a1206"/>
<use href="#sl" x="63" y="420"/><use href="#hh" x="103" y="420"/><text x="147" y="427" class="r l" style="fill:#3c2500">Rate</text>
<use href="#sl" x="63" y="435"/><use href="#hh" x="67" y="435"/><text x="147" y="442" class="r l" style="fill:#3c2500">Phase / Shuffle</text>
<use href="#sl" x="63" y="450"/><use href="#hh" x="149" y="450"/><text x="147" y="458" class="r l" style="fill:#3c2500">Magnitude</text>
<use href="#sb" x="63" y="466"/><use href="#hh" x="108" y="466"/><text x="147" y="473" class="r l" style="fill:#3c2500">Deform</text>
<rect x="172" y="416" width="36" height="28" rx="4" fill="#e4e4e4" stroke="#c8a060"/>
<rect x="173" y="425.500" width="34" height="9" fill="#f08a00"/>
<g style="font-size:7.300px"><text x="190" y="423" class="c" style="fill:#666">Freerun</text><text x="190" y="432" class="c" style="fill:#3a2200">Keytrigger</text><text x="190" y="441" class="c" style="fill:#666">Random</text></g>
<rect x="172" y="448" width="36" height="10" rx="4" fill="#e4e4e4" stroke="#c8a060"/><text x="190" y="455.700" class="c" style="font-size:7.300px;fill:#666">Unipolar</text>
<rect x="227" y="414" width="36" height="60.500" rx="3" fill="#e4e4e4" stroke="#c8a060"/>
<rect x="229" y="415" width="33" height="6" fill="#ff9400"/>
<path d="M229 422.500H262M229 429.500H262M229 437H262M229 444.500H262M229 452H262M229 459H262M229 466.500H262" stroke="#b4b4b8" stroke-width=".7"/>
<g style="font-size:5.800px;fill:#333"><text x="245" y="420" class="c" style="fill:#3a2200">Sine</text><text x="245" y="427.500" class="c">Triangle</text><text x="245" y="435" class="c">Square</text><text x="245" y="442" class="c">Ramp</text><text x="245" y="449.500" class="c">Noise</text><text x="245" y="457" class="c">S&amp;H</text><text x="245" y="464.500" class="c">Envelope</text><text x="245" y="472" class="c">Step Seq</text></g>
<path d="M277 421.500H487M277 445H487M277 468.500H487" stroke="#c67800" stroke-width=".9"/>
<path d="M278 445c6.900-30.700 12.100-30.700 19 0c6.900 30.700 12.100 30.700 19 0c6.900-30.700 12.100-30.700 19 0c6.900 30.700 12.100 30.700 19 0c6.900-30.700 12.100-30.700 19 0c6.900 30.700 12.100 30.700 19 0c6.900-30.700 12.100-30.700 19 0c6.900 30.700 12.100 30.700 19 0c6.900-30.700 12.100-30.700 19 0c6.900 30.700 12.100 30.700 19 0c6.900-30.700 12.100-30.700 19 0" fill="none" stroke="#3d2808" stroke-width="1"/>
<g style="font-size:5px;fill:#3a2200"><text x="278" y="473">0 s</text><text x="373" y="473">2.5 s</text><text x="469" y="473">5 s</text></g>
<text x="547" y="419" class="c" style="font-size:6.800px;fill:#4a2c00">LFO EG</text>
<path d="M505 416.500H533M561 416.500H588" stroke="#9c6000"/>
<use href="#vo" x="510" y="426"/><use href="#hv" x="510" y="457"/>
<use href="#vo" x="524" y="426"/><use href="#hv" x="524" y="457"/>
<use href="#vo" x="539" y="426"/><use href="#hv" x="539" y="457"/>
<use href="#vo" x="553" y="426"/><use href="#hv" x="553" y="439"/>
<use href="#vo" x="568" y="426"/><use href="#hv" x="568" y="428"/>
<use href="#vo" x="583" y="426"/><use href="#hv" x="583" y="428"/>
<g style="font-size:6.800px;fill:#4a2c00"><text x="510" y="473.500" class="c">D</text><text x="524" y="473.500" class="c">A</text><text x="539" y="473.500" class="c">H</text><text x="553" y="473.500" class="c">D</text><text x="568" y="473.500" class="c">S</text><text x="583" y="473.500" class="c">R</text></g>

<!-- bottom -->
<rect x="54" y="477" width="660" height="20" fill="#0c0c0c"/>
<text x="384" y="494" class="c" style="font-size:14px;fill:#7d7d7d">Surge</text>
</svg></body></html>
